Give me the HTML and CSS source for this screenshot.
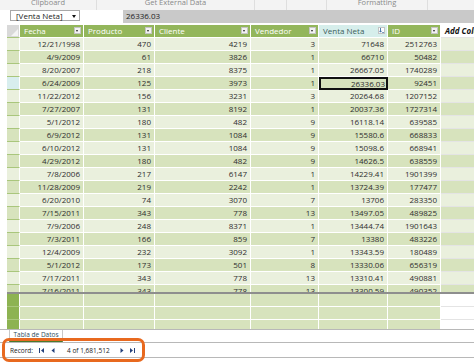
FILE: index.html
```html
<!DOCTYPE html>
<html lang="en">
<head>
    <meta charset="UTF-8">
    <title>PowerPivot - Tabla de Datos</title>
    <link rel="stylesheet" href="styles.css">
</head>
<body>
    <div class="ribbon">
        <div class="group g1"><span>Clipboard</span></div>
        <div class="group g2"><span>Get External Data</span></div>
        <div class="group g3"></div>
        <div class="group g4"></div>
        <div class="group g5"><span>Formatting</span></div>
        <div class="group g6"></div>
    </div>

    <div class="formula-bar">
        <div class="name-box">[Venta Neta]<span class="arrow"></span></div>
        <div class="fx"></div>
        <div class="formula">26336.03</div>
    </div>

    <div class="grid">
        <div class="row head">
            <div class="sel corner"><svg width="7" height="7" viewBox="0 0 7 7"><polygon points="7,0 7,7 0,7" fill="#f4f4f4"/></svg></div>
            <div>Fecha<span class="dd"></span></div>
            <div>Producto<span class="dd"></span></div>
            <div>Cliente<span class="dd"></span></div>
            <div>Vendedor<span class="dd"></span></div>
            <div class="active">Venta Neta<span class="dd sort"><svg width="5" height="5" viewBox="0 0 5 5"><path d="M1.5 0v4M0.3 2.8l1.2 1.4 1.2-1.4" stroke="#3a6ea5" fill="none" stroke-width="0.9"/><path d="M3.3 4.5h1.5" stroke="#3a6ea5" stroke-width="0.9"/></svg></span></div>
            <div>ID<span class="dd"></span></div>
            <div class="add">Add Column</div>
        </div>

        <div class="body">
            <div class="row"><div class="sel"></div><div>12/21/1998</div><div>470</div><div>4219</div><div>3</div><div>71648</div><div>2512763</div><div class="add"></div></div>
            <div class="row"><div class="sel"></div><div>4/9/2009</div><div>61</div><div>3826</div><div>1</div><div>66710</div><div>50482</div><div class="add"></div></div>
            <div class="row"><div class="sel"></div><div>8/20/2007</div><div>218</div><div>8375</div><div>1</div><div>26667.05</div><div>1740289</div><div class="add"></div></div>
            <div class="row current"><div class="sel"></div><div>6/24/2009</div><div>125</div><div>3973</div><div>1</div><div class="selected">26336.03</div><div>92451</div><div class="add"></div></div>
            <div class="row"><div class="sel"></div><div>11/22/2012</div><div>156</div><div>3231</div><div>3</div><div>20264.68</div><div>1207152</div><div class="add"></div></div>
            <div class="row"><div class="sel"></div><div>7/27/2007</div><div>131</div><div>8192</div><div>1</div><div>20037.36</div><div>1727314</div><div class="add"></div></div>
            <div class="row"><div class="sel"></div><div>5/1/2012</div><div>180</div><div>482</div><div>9</div><div>16118.14</div><div>639585</div><div class="add"></div></div>
            <div class="row"><div class="sel"></div><div>6/9/2012</div><div>131</div><div>1084</div><div>9</div><div>15580.6</div><div>668833</div><div class="add"></div></div>
            <div class="row"><div class="sel"></div><div>6/10/2012</div><div>131</div><div>1084</div><div>9</div><div>15098.6</div><div>668941</div><div class="add"></div></div>
            <div class="row"><div class="sel"></div><div>4/29/2012</div><div>180</div><div>482</div><div>9</div><div>14626.5</div><div>638559</div><div class="add"></div></div>
            <div class="row"><div class="sel"></div><div>7/8/2006</div><div>217</div><div>6147</div><div>1</div><div>14229.41</div><div>1901399</div><div class="add"></div></div>
            <div class="row"><div class="sel"></div><div>11/28/2009</div><div>219</div><div>2242</div><div>1</div><div>13724.39</div><div>177477</div><div class="add"></div></div>
            <div class="row"><div class="sel"></div><div>6/20/2010</div><div>74</div><div>3070</div><div>7</div><div>13706</div><div>283350</div><div class="add"></div></div>
            <div class="row"><div class="sel"></div><div>7/15/2011</div><div>343</div><div>778</div><div>13</div><div>13497.05</div><div>489825</div><div class="add"></div></div>
            <div class="row"><div class="sel"></div><div>7/9/2006</div><div>248</div><div>8371</div><div>1</div><div>13444.74</div><div>1901643</div><div class="add"></div></div>
            <div class="row"><div class="sel"></div><div>7/3/2011</div><div>166</div><div>859</div><div>7</div><div>13380</div><div>483226</div><div class="add"></div></div>
            <div class="row"><div class="sel"></div><div>12/4/2009</div><div>232</div><div>3092</div><div>1</div><div>13343.59</div><div>180489</div><div class="add"></div></div>
            <div class="row"><div class="sel"></div><div>5/1/2012</div><div>173</div><div>501</div><div>8</div><div>13330.06</div><div>656319</div><div class="add"></div></div>
            <div class="row"><div class="sel"></div><div>7/17/2011</div><div>343</div><div>778</div><div>13</div><div>13310.41</div><div>490881</div><div class="add"></div></div>
            <div class="row"><div class="sel"></div><div>7/16/2011</div><div>343</div><div>778</div><div>13</div><div>13300.59</div><div>490352</div><div class="add"></div></div>
        </div>

        <div class="split"></div>

        <div class="calc">
            <div class="row"><div class="sel"></div><div></div><div></div><div></div><div></div><div></div><div></div><div class="add"></div></div>
            <div class="row"><div class="sel"></div><div></div><div></div><div></div><div></div><div></div><div></div><div class="add"></div></div>
            <div class="row"><div class="sel"></div><div></div><div></div><div></div><div></div><div></div><div></div><div class="add"></div></div>
        </div>
    </div>

    <div class="tabs">
        <div class="tab">Tabla de Datos</div>
    </div>

    <div class="status">
        <span class="label">Record:</span>
        <svg class="nav first" width="6" height="5" viewBox="0 0 6 5"><rect x="0" y="0" width="1" height="5" fill="#24407a"/><polygon points="5,0 5,5 2,2.5" fill="#24407a"/></svg>
        <svg class="nav prev" width="4" height="5" viewBox="0 0 4 5"><polygon points="3.5,0 3.5,5 0.5,2.5" fill="#24407a"/></svg>
        <span class="count">4 of 1,681,512</span>
        <svg class="nav next" width="4" height="5" viewBox="0 0 4 5"><polygon points="0.5,0 0.5,5 3.5,2.5" fill="#24407a"/></svg>
        <svg class="nav last" width="6" height="5" viewBox="0 0 6 5"><polygon points="1,0 1,5 4,2.5" fill="#24407a"/><rect x="5" y="0" width="1" height="5" fill="#24407a"/></svg>
    </div>

    <div class="callout"></div>
</body>
</html>
```

FILE: styles.css
```css
body {
    margin: 0;
    background: #fff;
    font-family: 'Open Sans', 'Noto Sans', sans-serif;
    color: #333;
    width: 474px;
    height: 364px;
    overflow: hidden;
    position: relative;
}

/* ribbon group captions, cut off at the top */
.ribbon {
    display: flex;
    height: 10px;
    background: #f3f3f3;
    overflow: hidden;
}
.ribbon .group {
    border-right: 1px solid #dedede;
    text-align: center;
    font-size: 7.5px;
    color: #8a8a8a;
    line-height: 8px;
}
.ribbon .group span {
    display: block;
    margin-top: -2px;
}
.g1 { width: 96px; }
.g2 { width: 157px; }
.g3 { width: 31px; }
.g4 { width: 39px; }
.g5 { width: 100px; }
.g6 { flex: 1; border-right: none !important; }

/* formula bar */
.formula-bar {
    display: flex;
    height: 13px;
    background: #fff;
}
.name-box {
    margin-left: 10px;
    width: 70px;
    height: 11px;
    box-sizing: border-box;
    border: 1px solid #a8a8a8;
    background: #fff;
    font-size: 8px;
    line-height: 9px;
    padding-left: 5px;
    position: relative;
    color: #222;
}
.name-box .arrow {
    position: absolute;
    right: 3px;
    top: 4px;
    border-left: 2.5px solid transparent;
    border-right: 2.5px solid transparent;
    border-top: 3px solid #111;
}
.fx {
    width: 43px;
}
.formula {
    flex: 1;
    background: #c9c9c9;
    font-size: 8px;
    line-height: 12px;
    padding-left: 3px;
    color: #222;
}

/* data grid */
.grid {
    margin-top: 2px;
    padding-left: 7px;
}
.row {
    display: grid;
    grid-template-columns: 13px 64px 71px 96px 68px 69px 53px 1fr;
    height: 13px;
}
.row > div {
    box-sizing: border-box;
    border-right: 1px solid #fff;
    border-bottom: 1px solid #fff;
    font-size: 8px;
    line-height: 12px;
    text-align: right;
    padding-right: 3px;
    white-space: nowrap;
    overflow: hidden;
    color: #2e2e2e;
}
.body .row:nth-child(odd) > div { background: #eaf0dd; }
.body .row:nth-child(even) > div { background: #d7e3bd; }

.row > .sel,
.body .row > .sel {
    background: #8db352;
    border-right: 1px solid #fff;
    border-bottom: 1px solid #a9c67c;
}
.body .row.current > .sel { background: #d8eeee; }

.row > .add,
.body .row > .add {
    background: #fff;
    border-right: none;
    border-bottom: 1px solid #e4e4e4;
}

.body .row > .selected {
    background: #fbfdf7;
    border: 2px solid #111;
    line-height: 9px;
    padding-right: 1px;
}

.head {
    height: 13px;
}
.head > div {
    position: relative;
    background: #93b65b;
    color: #fff;
    text-align: left;
    padding-left: 4px;
    line-height: 12px;
    border-bottom: 1px solid #fff;
}
.head > .corner {
    background: #d9d9d9;
    padding: 0;
    display: flex;
    align-items: flex-end;
    justify-content: flex-end;
}
.head > .corner svg {
    margin: 0 1px 1px 0;
}
.head > .active {
    background: #d6eeeb;
    color: #3d5d5a;
}
.head > .add {
    background: #fff;
    color: #111;
    font-weight: bold;
    font-style: italic;
    padding-left: 4px;
    border-bottom: 1px solid #e4e4e4;
}
.dd {
    position: absolute;
    right: 2px;
    top: 2px;
    width: 7px;
    height: 7px;
    box-sizing: border-box;
    border: 1px solid #c4c4c4;
    background: #f2f2f2;
}
.dd::after {
    content: "";
    position: absolute;
    left: 1px;
    top: 2px;
    border-left: 1.5px solid transparent;
    border-right: 1.5px solid transparent;
    border-top: 2px solid #222;
}
.dd.sort {
    background: #fff;
}
.dd.sort::after {
    display: none;
}
.dd.sort svg {
    display: block;
}

.body {
    height: 254px;
    overflow: hidden;
}

.split {
    height: 2px;
    background: #8e8e8e;
}

.calc {
    height: 35px;
    overflow: hidden;
    border-bottom: 1px solid #b8b8b8;
    margin-left: -7px;
    padding-left: 7px;
}
.calc .row > div {
    background: #d7e3bd;
}
.calc .row > .sel {
    background: #8db352;
}
.calc .row > .add {
    background: #fff;
}

/* sheet tab */
.tabs {
    height: 12px;
    padding-left: 9px;
    border-bottom: 1px solid #b8b8b8;
}
.tab {
    width: 54px;
    height: 12px;
    box-sizing: border-box;
    border-left: 1px solid #c8c8c8;
    border-right: 1px solid #c8c8c8;
    border-bottom: 2px solid #4d7a2a;
    background: #fff;
    font-size: 6.5px;
    line-height: 10px;
    text-align: center;
    color: #2e4e5e;
}

/* record navigation */
.status {
    display: flex;
    align-items: center;
    height: 14px;
    border-bottom: 1px solid #b8b8b8;
    padding-left: 10px;
    font-size: 6.5px;
    color: #222;
}
.status .label {
    margin-right: 6px;
}
.status .nav.prev { margin-left: 6px; }
.status .count { margin-left: 12px; width: 53px; }
.status .nav.last { margin-left: 5px; }

/* annotation drawn over the status bar */
.callout {
    position: absolute;
    left: 2px;
    top: 338px;
    width: 143px;
    height: 24px;
    box-sizing: border-box;
    border: 3px solid #e8691f;
    border-radius: 7px;
}
```
